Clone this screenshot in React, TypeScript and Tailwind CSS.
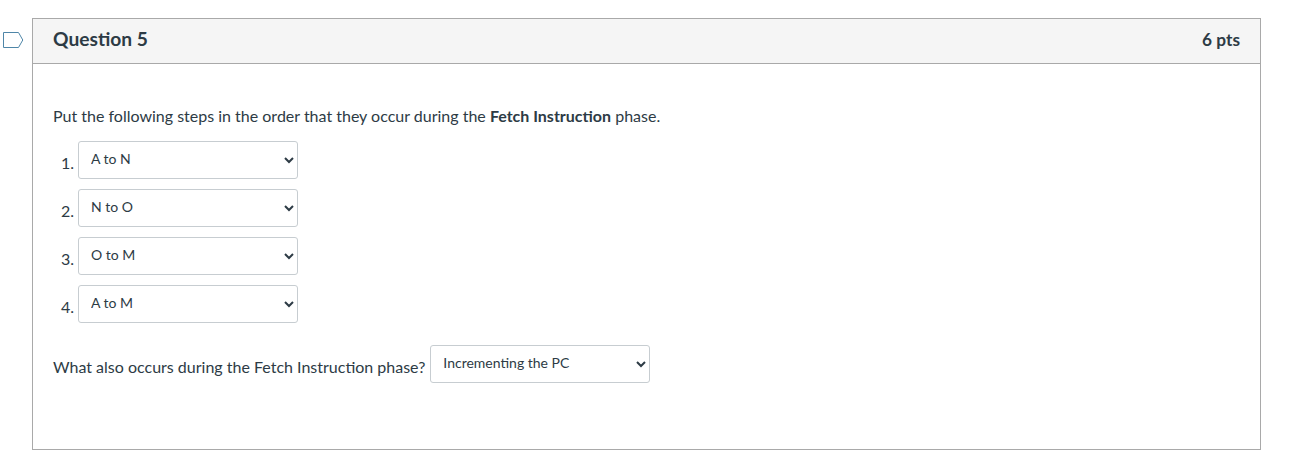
const font = { fontFamily: '"Lato", "Noto Sans", sans-serif' };

function Pick({ value }: { value: string }) {
  return (
    <select
      defaultValue={value}
      className="h-[38px] w-[220px] rounded-[3px] border border-[#c7cdd1] bg-white pl-[8px] pr-[1px] pb-[4px] text-[14px] text-[#2d3b45]"
      style={font}
    >
      <option>{value}</option>
    </select>
  );
}

const steps = ["A to N", "N to O", "O to M", "A to M"];

export default function App() {
  return (
    <div className="h-[453px] w-[1305px] overflow-hidden bg-white pt-[18px] text-[#2d3b45]" style={font}>
      <div className="flex items-start">
        <div className="flex h-[46px] w-[32px] shrink-0 items-center pl-[3px] pb-[2px]">
          <svg width="21" height="16" viewBox="0 0 21 16" fill="none">
            <path d="M0.5 0.5H15.5L19.8 8L15.5 15.5H0.5Z" stroke="#4f86a8" strokeWidth="1" fill="white" />
          </svg>
        </div>
        <div className="h-[432px] w-[1229px] border border-[#a9a9a9]">
          <div className="flex h-[45px] items-center justify-between border-b border-[#a9a9a9] bg-[#f5f5f5] pl-[20px] pr-[20px]">
            <h2 className="text-[19.2px] font-bold leading-none pb-[5px]">Question 5</h2>
            <span className="pb-[2px] text-[17.3px] font-bold">6 pts</span>
          </div>
          <div className="pl-[20px] pt-[42px]">
            <p className="text-[16px] leading-[20px]">
              Put the following steps in the order that they occur during the <b>Fetch Instruction</b> phase.
            </p>
            <div className="mt-[15px] flex flex-col gap-[10px] pl-[7px]">
              {steps.map((s, i) => (
                <div key={s} className="flex items-center gap-[4px]">
                  <span className="w-[14px] pt-[5px] text-right text-[16px] leading-[20px]">{i + 1}.</span>
                  <Pick value={s} />
                </div>
              ))}
            </div>
            <div className="mt-[22px] flex items-center gap-[5px]">
              <span className="pt-[6px] text-[16px] leading-[20px]">What also occurs during the Fetch Instruction phase?</span>
              <Pick value="Incrementing the PC" />
            </div>
          </div>
        </div>
      </div>
    </div>
  );
}
